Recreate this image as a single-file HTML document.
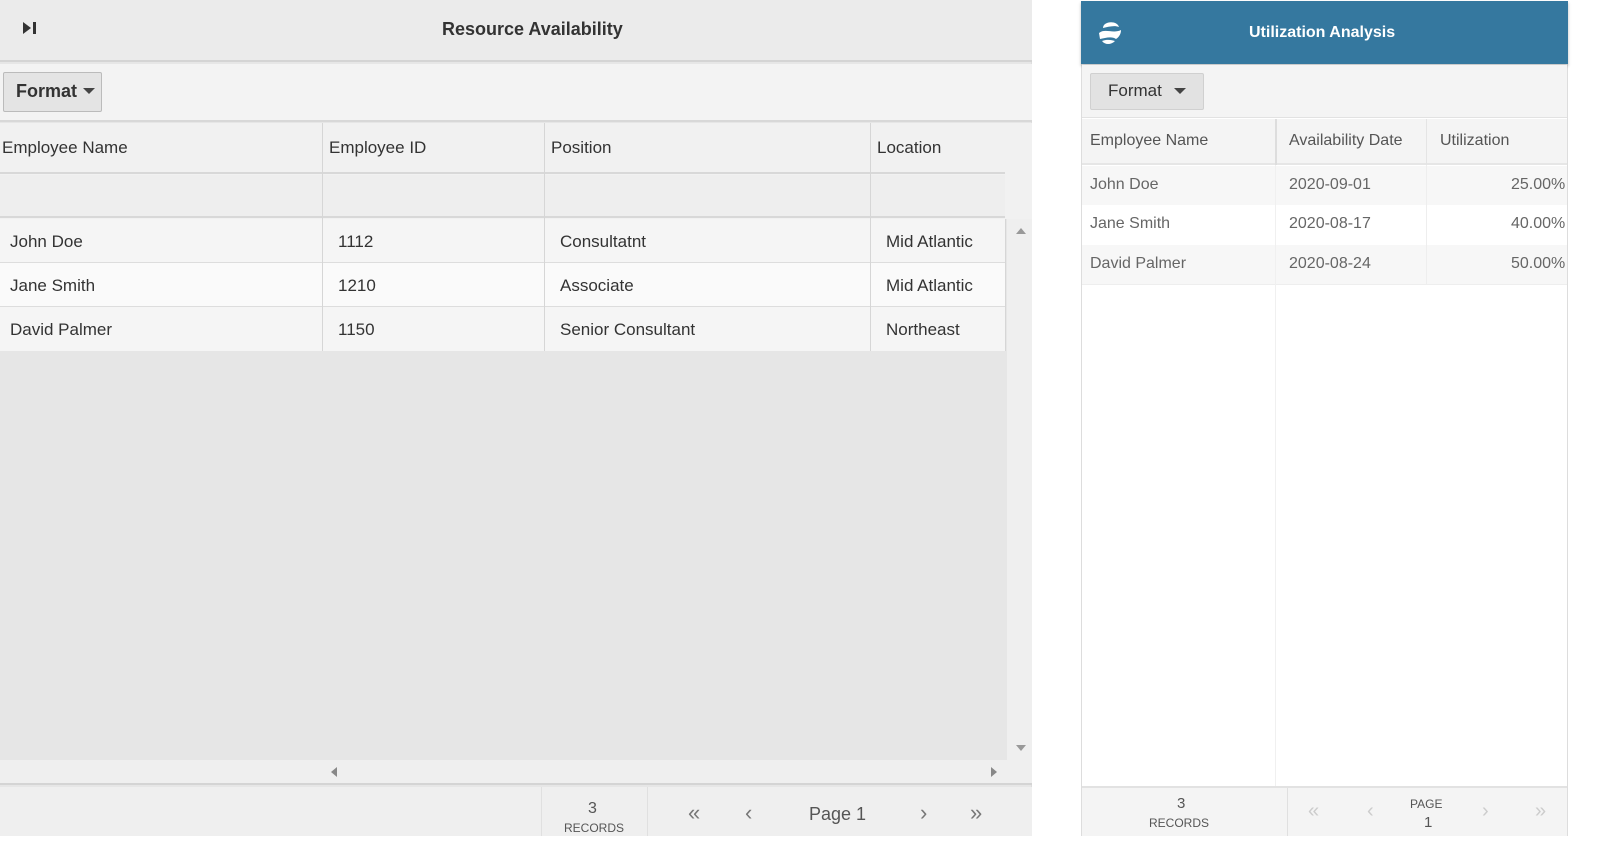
<!DOCTYPE html>
<html><head><style>
*{box-sizing:border-box;margin:0;padding:0}
body{width:1600px;height:854px;background:#fff;font-family:"Liberation Sans",sans-serif;position:relative;overflow:hidden;color:#333}
.a{position:absolute}
.t{position:absolute;white-space:nowrap}
</style></head><body>
<!-- LEFT PANEL -->
<div class="a" style="left:0;top:0;width:1032px;height:836px;background:#e6e6e6;border-right:1px solid #ddd"></div>
<div class="a" style="left:0;top:0;width:1032px;height:62px;background:#ebebeb;border-bottom:2px solid #d4d4d4"></div>
<svg class="a" style="left:22px;top:20px" width="16" height="16"><polygon points="1,2 9,8 1,14" fill="#333"/><rect x="11" y="2" width="3" height="12" fill="#333"/></svg>
<div class="t" style="left:442px;top:19px;font-size:18px;font-weight:bold;color:#333">Resource Availability</div>
<div class="a" style="left:0;top:64px;width:1032px;height:58px;background:#f3f3f3;border-bottom:2px solid #d8d8d8"></div>
<div class="a" style="left:3px;top:72px;width:99px;height:40px;background:#e4e4e4;border:1px solid #bbb;border-radius:2px"></div>
<div class="t" style="left:16px;top:81px;font-size:18px;font-weight:bold;color:#333">Format</div>
<svg class="a" style="left:83px;top:88px" width="12" height="7"><polygon points="0,0 12,0 6,6" fill="#444"/></svg>
<div class="a" style="left:0;top:123px;width:1032px;height:96px;background:#f1f1f1"></div>
<div class="a" style="left:0;top:172px;width:1005px;height:2px;background:#d8d8d8"></div>
<div class="a" style="left:0;top:175px;width:1005px;height:43px;background:#eeeeee;border-bottom:2px solid #d8d8d8"></div>
<div class="t" style="left:2px;top:138px;font-size:17px">Employee Name</div>
<div class="t" style="left:329px;top:138px;font-size:17px">Employee ID</div>
<div class="t" style="left:551px;top:138px;font-size:17px">Position</div>
<div class="t" style="left:877px;top:138px;font-size:17px">Location</div>
<div class="a" style="left:0;top:219px;width:1005px;height:44px;background:#f5f5f5;border-bottom:1px solid #ddd"></div>
<div class="a" style="left:0;top:263px;width:1005px;height:44px;background:#fafafa;border-bottom:1px solid #ddd"></div>
<div class="a" style="left:0;top:307px;width:1005px;height:44px;background:#f5f5f5"></div>
<div class="a" style="left:322px;top:123px;width:1px;height:228px;background:#d6d6d6"></div>
<div class="a" style="left:544px;top:123px;width:1px;height:228px;background:#d6d6d6"></div>
<div class="a" style="left:870px;top:123px;width:1px;height:228px;background:#d6d6d6"></div>
<div class="a" style="left:1005px;top:219px;width:1px;height:132px;background:#d6d6d6"></div>
<div class="t" style="left:10px;top:232px;font-size:17px">John Doe</div>
<div class="t" style="left:338px;top:232px;font-size:17px">1112</div>
<div class="t" style="left:560px;top:232px;font-size:17px">Consultatnt</div>
<div class="t" style="left:886px;top:232px;font-size:17px">Mid Atlantic</div>
<div class="t" style="left:10px;top:276px;font-size:17px">Jane Smith</div>
<div class="t" style="left:338px;top:276px;font-size:17px">1210</div>
<div class="t" style="left:560px;top:276px;font-size:17px">Associate</div>
<div class="t" style="left:886px;top:276px;font-size:17px">Mid Atlantic</div>
<div class="t" style="left:10px;top:320px;font-size:17px">David Palmer</div>
<div class="t" style="left:338px;top:320px;font-size:17px">1150</div>
<div class="t" style="left:560px;top:320px;font-size:17px">Senior Consultant</div>
<div class="t" style="left:886px;top:320px;font-size:17px">Northeast</div>
<div class="a" style="left:1007px;top:219px;width:25px;height:541px;background:#efefef"></div>
<svg class="a" style="left:1016px;top:228px" width="10" height="8"><polygon points="0,6 10,6 5,0" fill="#999"/></svg>
<svg class="a" style="left:1016px;top:745px" width="10" height="8"><polygon points="0,0 10,0 5,6" fill="#999"/></svg>
<div class="a" style="left:0;top:760px;width:1032px;height:25px;background:#efefef;border-bottom:2px solid #d4d4d4"></div>
<svg class="a" style="left:331px;top:767px" width="8" height="10"><polygon points="6,0 6,10 0,5" fill="#888"/></svg>
<svg class="a" style="left:991px;top:767px" width="8" height="10"><polygon points="0,0 0,10 6,5" fill="#888"/></svg>
<div class="a" style="left:0;top:787px;width:1032px;height:49px;background:#efefef"></div>
<div class="a" style="left:541px;top:787px;width:1px;height:49px;background:#e0e0e0"></div>
<div class="a" style="left:647px;top:787px;width:1px;height:49px;background:#e0e0e0"></div>
<div class="t" style="left:588px;top:800px;font-size:16px;color:#555">3</div>
<div class="t" style="left:564px;top:821px;font-size:12px;color:#555">RECORDS</div>
<div class="t" style="left:688px;top:800px;font-size:22px;color:#777">«</div>
<div class="t" style="left:745px;top:800px;font-size:22px;color:#777">‹</div>
<div class="t" style="left:809px;top:804px;font-size:18px;color:#555">Page 1</div>
<div class="t" style="left:920px;top:800px;font-size:22px;color:#777">›</div>
<div class="t" style="left:970px;top:800px;font-size:22px;color:#777">»</div>
<!-- RIGHT PANEL -->
<div class="a" style="left:1081px;top:1px;width:487px;height:835px;background:#fff;border:1px solid #ddd"></div>
<div class="a" style="left:1081px;top:1px;width:487px;height:63px;background:#35789f;box-shadow:0 2px 3px rgba(0,0,0,.25)"></div>
<svg class="a" style="left:1096px;top:18px" width="28" height="28" viewBox="0 0 28 28"><path d="M7,10 C7,3 21,2 23,9 C18,7 12,9 7,10 Z" fill="#fff"/><path d="M3,15 C9,10 17,16 25,12 C25,16 23,19 20,21 C16,18 9,20 4,21 Z" fill="#fff"/><path d="M6,23 C11,21 16,22 19,23 C15,27 9,27 6,23 Z" fill="#fff"/></svg>
<div class="t" style="left:1249px;top:24px;font-size:16px;font-weight:bold;color:#fff">Utilization Analysis</div>
<div class="a" style="left:1082px;top:65px;width:485px;height:53px;background:#f4f4f4;border-bottom:1px solid #e2e2e2"></div>
<div class="a" style="left:1090px;top:73px;width:114px;height:37px;background:#e2e2e2;border:1px solid #d0d0d0;border-radius:2px"></div>
<div class="t" style="left:1108px;top:81px;font-size:17px;color:#333">Format</div>
<svg class="a" style="left:1174px;top:88px" width="12" height="7"><polygon points="0,0 12,0 6,6" fill="#444"/></svg>
<div class="a" style="left:1082px;top:119px;width:485px;height:46px;background:#f4f4f4;border-bottom:2px solid #e6e6e6"></div>
<div class="t" style="left:1090px;top:132px;font-size:16px;color:#555">Employee Name</div>
<div class="t" style="left:1289px;top:132px;font-size:16px;color:#555">Availability Date</div>
<div class="t" style="left:1440px;top:132px;font-size:16px;color:#555">Utilization</div>
<div class="a" style="left:1082px;top:166px;width:485px;height:39px;background:#f7f7f7"></div>
<div class="a" style="left:1082px;top:245px;width:485px;height:39px;background:#f7f7f7"></div>
<div class="a" style="left:1082px;top:284px;width:485px;height:1px;background:#eee"></div>
<div class="a" style="left:1275px;top:119px;width:2px;height:46px;background:#ddd"></div>
<div class="a" style="left:1426px;top:119px;width:1px;height:46px;background:#e4e4e4"></div>
<div class="a" style="left:1275px;top:165px;width:1px;height:622px;background:#f0f0f0"></div>
<div class="a" style="left:1426px;top:165px;width:1px;height:120px;background:#eeeeee"></div>
<div class="t" style="left:1090px;top:176px;font-size:16px;color:#666">John Doe</div>
<div class="t" style="left:1289px;top:176px;font-size:16px;color:#666">2020-09-01</div>
<div class="t" style="left:1511px;top:176px;font-size:16px;color:#666">25.00%</div>
<div class="t" style="left:1090px;top:215px;font-size:16px;color:#666">Jane Smith</div>
<div class="t" style="left:1289px;top:215px;font-size:16px;color:#666">2020-08-17</div>
<div class="t" style="left:1511px;top:215px;font-size:16px;color:#666">40.00%</div>
<div class="t" style="left:1090px;top:255px;font-size:16px;color:#666">David Palmer</div>
<div class="t" style="left:1289px;top:255px;font-size:16px;color:#666">2020-08-24</div>
<div class="t" style="left:1511px;top:255px;font-size:16px;color:#666">50.00%</div>
<div class="a" style="left:1082px;top:786px;width:485px;height:50px;background:#f4f4f4;border-top:2px solid #e2e2e2"></div>
<div class="a" style="left:1287px;top:788px;width:1px;height:48px;background:#e0e0e0"></div>
<div class="t" style="left:1177px;top:795px;font-size:15px;color:#555">3</div>
<div class="t" style="left:1149px;top:816px;font-size:12px;color:#555">RECORDS</div>
<div class="t" style="left:1308px;top:800px;font-size:20px;color:#ccc">«</div>
<div class="t" style="left:1367px;top:800px;font-size:20px;color:#ccc">‹</div>
<div class="t" style="left:1410px;top:797px;font-size:12px;color:#555">PAGE</div>
<div class="t" style="left:1424px;top:814px;font-size:15px;color:#555">1</div>
<div class="t" style="left:1482px;top:800px;font-size:20px;color:#ccc">›</div>
<div class="t" style="left:1535px;top:800px;font-size:20px;color:#ccc">»</div>
</body></html>
